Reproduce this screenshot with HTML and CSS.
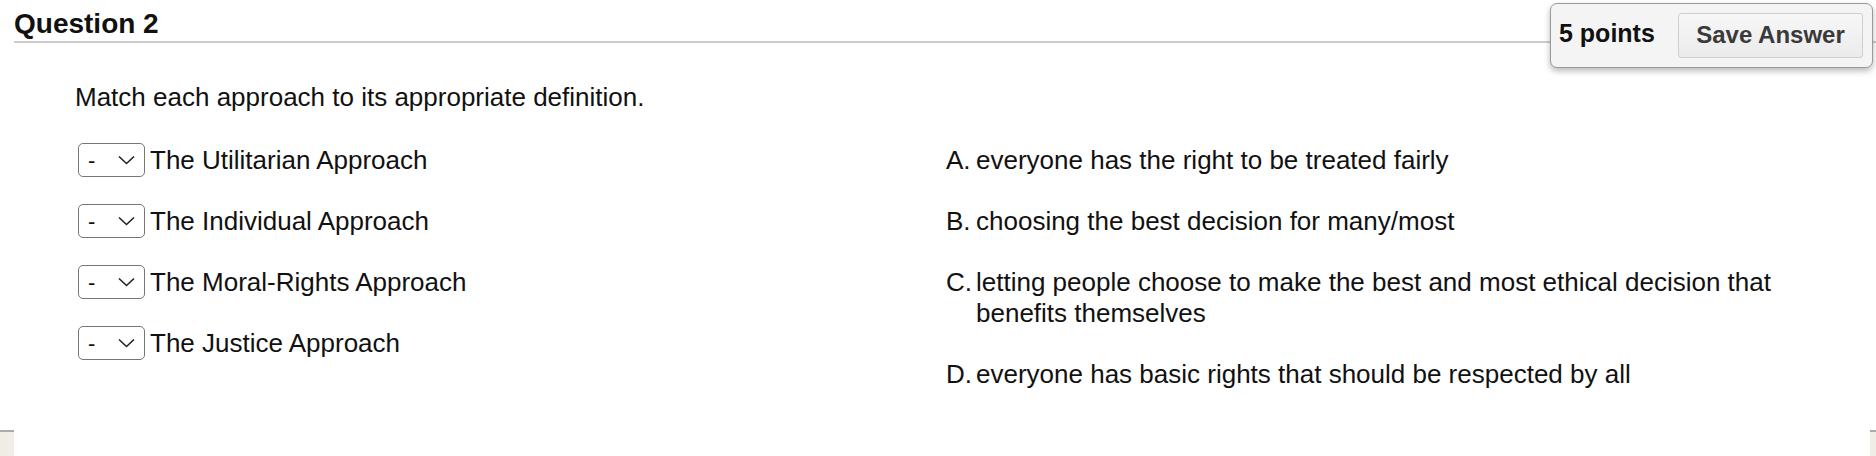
FILE: index.html
```html
<!doctype html>
<html>
<head>
<meta charset="UTF-8">
<title>Question 2</title>
<link rel="stylesheet" href="styles.css">
</head>
<body>
	<div class="question">
		<h2 class="q-title">Question 2</h2>
		<div class="points-box">
			<span class="points">5 points</span>
			<button class="save">Save Answer</button>
		</div>

		<div class="q-body">
			<p class="prompt">Match each approach to its appropriate definition.</p>
			<div class="match">
				<div class="left">
					<div class="item">
						<span class="pick"><select><option>-</option><option>A</option><option>B</option><option>C</option><option>D</option></select><svg class="chev" width="17" height="10" viewBox="0 0 17 10"><path d="M1 1.5l7.5 7 7.5-7" fill="none" stroke="#222" stroke-width="1.6"/></svg></span>
						<span class="label">The Utilitarian Approach</span>
					</div>
					<div class="item">
						<span class="pick"><select><option>-</option><option>A</option><option>B</option><option>C</option><option>D</option></select><svg class="chev" width="17" height="10" viewBox="0 0 17 10"><path d="M1 1.5l7.5 7 7.5-7" fill="none" stroke="#222" stroke-width="1.6"/></svg></span>
						<span class="label">The Individual Approach</span>
					</div>
					<div class="item">
						<span class="pick"><select><option>-</option><option>A</option><option>B</option><option>C</option><option>D</option></select><svg class="chev" width="17" height="10" viewBox="0 0 17 10"><path d="M1 1.5l7.5 7 7.5-7" fill="none" stroke="#222" stroke-width="1.6"/></svg></span>
						<span class="label">The Moral-Rights Approach</span>
					</div>
					<div class="item">
						<span class="pick"><select><option>-</option><option>A</option><option>B</option><option>C</option><option>D</option></select><svg class="chev" width="17" height="10" viewBox="0 0 17 10"><path d="M1 1.5l7.5 7 7.5-7" fill="none" stroke="#222" stroke-width="1.6"/></svg></span>
						<span class="label">The Justice Approach</span>
					</div>
				</div>
				<div class="right">
					<div class="answer"><span class="letter">A.</span><span class="def">everyone has the right to be treated fairly</span></div>
					<div class="answer"><span class="letter">B.</span><span class="def">choosing the best decision for many/most</span></div>
					<div class="answer"><span class="letter">C.</span><span class="def">letting people choose to make the best and most ethical decision that benefits themselves</span></div>
					<div class="answer"><span class="letter">D.</span><span class="def">everyone has basic rights that should be respected by all</span></div>
				</div>
			</div>
		</div>
	</div>

	<div class="next">
		<div class="next-inner"></div>
	</div>
</body>
</html>
```

FILE: styles.css
```css
* { box-sizing: border-box }
html, body {
	margin: 0;
	background: #fff;
	color: #111;
	font-family: "Liberation Sans", Arial, Helvetica, sans-serif;
}
.question {
	position: relative;
	padding: 0 0 0 14px;
	height: 430px;
}
.q-title {
	margin: 0;
	padding-top: 7px;
	font-size: 28px;
	line-height: 34px;
	font-weight: bold;
	border-bottom: 2px solid #cccccc;
}
.points-box {
	position: absolute;
	top: 3px;
	left: 1550px;
	width: 323px;
	height: 65px;
	display: flex;
	align-items: center;
	justify-content: space-between;
	padding: 0 9px 0 8px;
	background: #f4f4f4;
	border: 1.5px solid #9a9a9a;
	border-radius: 7px;
	box-shadow: 0 3px 6px rgba(0, 0, 0, 0.28);
}
.points {
	font-size: 25px;
	font-weight: bold;
	color: #111;
	margin-bottom: 4px;
}
.save {
	width: 185px;
	height: 45px;
	margin-bottom: 1px;
	font-family: inherit;
	font-size: 24px;
	font-weight: bold;
	color: #3a3a3a;
	background: linear-gradient(#f7f7f7, #ebebeb);
	border: 1px solid #cfcfcf;
	border-radius: 3px;
	padding: 0;
}
.q-body {
	padding-left: 61px;
}
.prompt {
	margin: 39px 0 0;
	font-size: 26px;
	line-height: 30px;
	color: #111;
}
.match {
	display: grid;
	grid-template-columns: 868px 1fr;
	margin: 31px 0 0 3px;
	font-size: 26px;
	color: #111;
}
.left {
	display: flex;
	flex-direction: column;
	gap: 27px;
}
.item {
	display: flex;
	align-items: center;
	height: 34px;
	gap: 5px;
}
.pick {
	position: relative;
	display: inline-block;
	width: 67px;
	height: 34px;
}
.pick select {
	-webkit-appearance: none;
	appearance: none;
	width: 67px;
	height: 34px;
	padding: 0 0 0 9px;
	font-family: inherit;
	font-size: 22px;
	color: #111;
	background: #fff;
	border: 1.5px solid #767676;
	border-radius: 5px;
}
.chev {
	position: absolute;
	left: 40px;
	top: 12px;
	pointer-events: none;
}
.label {
	line-height: 34px;
}
.right {
	display: flex;
	flex-direction: column;
	gap: 30px;
	padding-top: 2px;
}
.answer {
	display: flex;
	line-height: 31px;
}
.letter {
	flex: 0 0 30px;
}
.def {
	width: 830px;
}
.next {
	height: 26px;
	padding: 0 6px 0 14px;
	background: #efede6;
	border-top: 2px solid #aaaaaa;
}
.next-inner {
	margin-top: -2px;
	height: 28px;
	background: #fff;
}
```
